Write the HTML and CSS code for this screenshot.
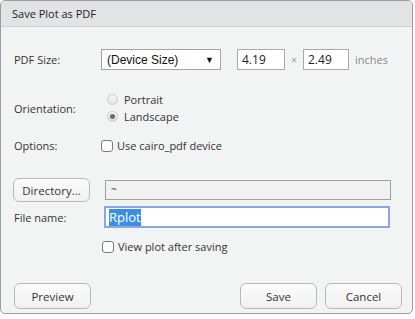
FILE: index.html
```html
<!DOCTYPE html>
<html>
<head>
<meta charset="utf-8">
<link rel="stylesheet" href="styles.css">
</head>
<body>
<div class="dialog">
  <div class="titlebar">Save Plot as PDF</div>
  <div class="content">
    <div class="row row-size">
      <div class="label">PDF Size:</div>
      <div class="select"><span>(Device Size)</span><span class="arrow">▼</span></div>
      <div class="num num-w">4.19</div>
      <span class="times">×</span>
      <div class="num num-h">2.49</div>
      <span class="unit">inches</span>
    </div>
    <div class="row row-orient">
      <div class="label">Orientation:</div>
      <div class="radios">
        <div class="radio"><span class="rb"></span>Portrait</div>
        <div class="radio"><span class="rb on"></span>Landscape</div>
      </div>
    </div>
    <div class="row row-opt">
      <div class="label">Options:</div>
      <div class="check"><span class="cb"></span>Use cairo_pdf device</div>
    </div>
    <div class="row row-dir">
      <div class="btn btn-dir">Directory...</div>
      <div class="field dir">~</div>
    </div>
    <div class="row row-file">
      <div class="label">File name:</div>
      <div class="field file"><span class="sel">Rplot</span></div>
    </div>
    <div class="row row-view">
      <div class="check"><span class="cb"></span>View plot after saving</div>
    </div>
    <div class="buttons">
      <div class="btn">Preview</div>
      <div class="spacer"></div>
      <div class="btn">Save</div>
      <div class="btn">Cancel</div>
    </div>
  </div>
</div>
</body>
</html>
```
FILE: styles.css
```css
html, body {
  margin: 0;
  padding: 0;
  background: #ffffff;
}
body {
  font-family: "Open Sans", "Noto Sans", sans-serif;
  font-size: 11px;
  color: #333333;
}
.dialog {
  width: 411px;
  height: 312px;
  border: 1px solid #9c9c9c;
  border-radius: 5px;
  overflow: hidden;
  background: #f2f3f3;
  display: flex;
  flex-direction: column;
}
.titlebar {
  height: 26px;
  box-sizing: border-box;
  background: #e2e3e5;
  border-bottom: 1px solid #cfd0d2;
  padding-left: 11px;
  line-height: 25px;
  color: #222;
}
.content {
  flex: 1;
  display: flex;
  flex-direction: column;
  padding: 0 10px 0 13px;
}
.row {
  display: flex;
  align-items: center;
}
.label {
  width: 87px;
  flex: none;
}
.row-size {
  margin-top: 22px;
  height: 21px;
}
.select {
  height: 19px;
  border: 1px solid #a3a3a3;
  background: #fff;
  display: flex;
  align-items: center;
  justify-content: space-between;
  padding: 0 6px 0 5px;
  font-family: "Liberation Sans", Arial, sans-serif;
  font-size: 12px;
  color: #111;
  width: 107px;
  flex: none;
}
.arrow {
  font-size: 9px;
  color: #111;
}
.num {
  height: 19px;
  border: 1px solid #a9a9a9;
  background: #fff;
  padding-left: 4px;
  line-height: 19px;
  font-size: 12px;
  color: #222;
  flex: none;
}
.num-w {
  width: 42px;
  margin-left: 16px;
}
.num-h {
  width: 40px;
}
.times {
  width: 18px;
  text-align: center;
  color: #999;
  font-size: 10px;
}
.unit {
  margin-left: 6px;
  color: #888;
}
.row-orient {
  margin-top: 22px;
}
.radios {
  display: flex;
  flex-direction: column;
  gap: 2px;
  margin-left: 6px;
}
.radio {
  display: flex;
  align-items: center;
  height: 15px;
}
.rb {
  width: 11px;
  height: 11px;
  border: 1px solid #c9c9c9;
  border-radius: 50%;
  background: linear-gradient(#f6f6f6, #e2e2e2);
  margin-right: 6px;
  box-sizing: border-box;
  display: flex;
  align-items: center;
  justify-content: center;
}
.rb.on::after {
  content: "";
  width: 5px;
  height: 5px;
  border-radius: 50%;
  background: #6a6a6a;
}
.row-opt {
  margin-top: 14px;
}
.check {
  display: flex;
  align-items: center;
}
.cb {
  width: 12px;
  height: 12px;
  border: 1px solid #7b7b7b;
  border-radius: 3px;
  background: #fff;
  box-sizing: border-box;
  margin-right: 4px;
}
.row-dir {
  margin-top: 25px;
}
.btn {
  height: 24px;
  box-sizing: border-box;
  border: 1px solid #b8b8b8;
  border-radius: 6px;
  background: linear-gradient(#fbfbfb, #f1f1f1);
  display: flex;
  align-items: center;
  justify-content: center;
  color: #333;
  width: 77px;
  font-size: 11.5px;
}
.btn-dir {
  margin-left: -1px;
  margin-right: 15px;
}
.field {
  height: 20px;
  box-sizing: border-box;
  flex: none;
  width: 286px;
}
.dir {
  background: #f1f1f1;
  border: 1px solid #a0a0a0;
  padding-left: 5px;
  line-height: 16px;
  font-size: 10px;
  color: #333;
}
.row-file {
  margin-top: 4px;
}
.file {
  height: 22px;
  background: #fff;
  border: 2px solid #8aa8dc;
  padding-left: 3px;
  display: flex;
  align-items: center;
  margin-left: 3px;
}
.sel {
  background: #3b8ee6;
  color: #fff;
  font-size: 13px;
  line-height: 17px;
}
.row-view {
  margin-top: 11px;
  padding-left: 88px;
}
.buttons {
  margin-top: auto;
  margin-bottom: 4px;
  display: flex;
  gap: 8px;
}
.buttons .btn {
  height: 26px;
  width: 77px;
}
.spacer {
  flex: 1;
}
```
